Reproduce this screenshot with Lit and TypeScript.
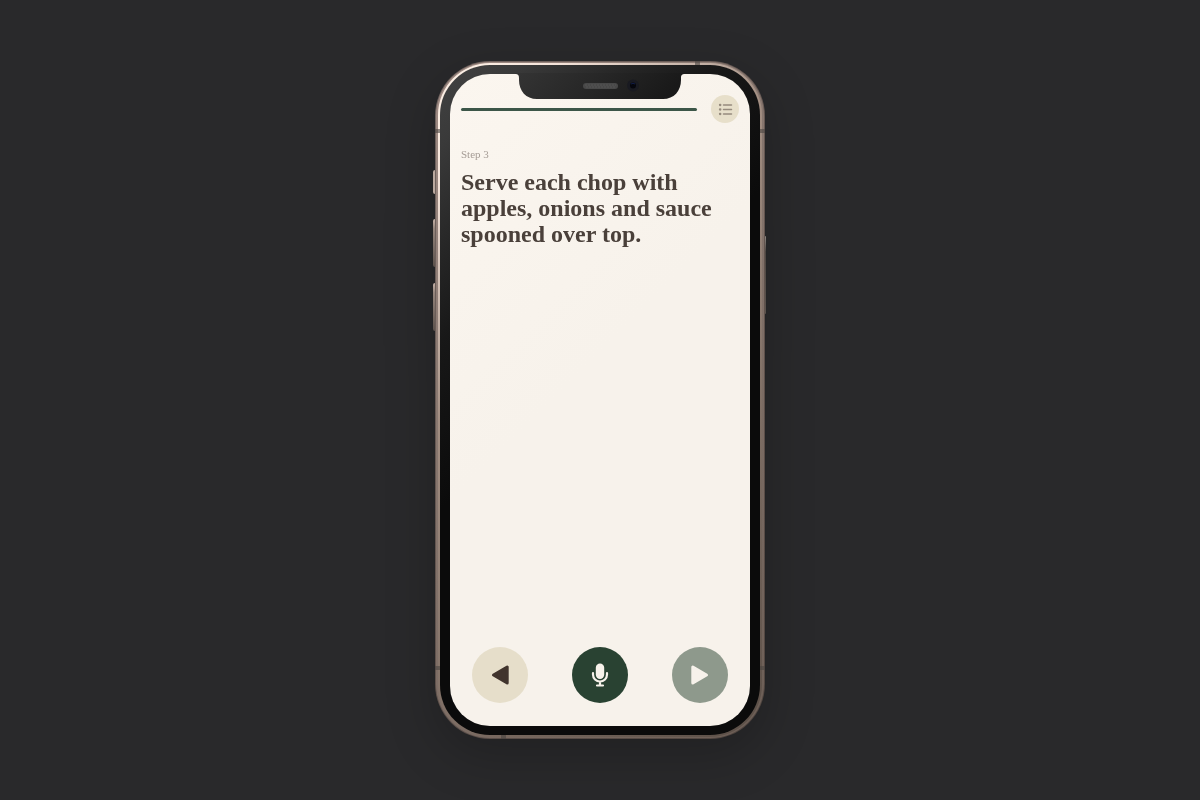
import { LitElement, html, css, svg } from "lit";
import { customElement } from "lit/decorators.js";

@customElement("phone-frame")
export class PhoneFrame extends LitElement {
  static styles = css`
    :host {
      position: relative;
      display: block;
      width: 330px;
      max-width: 100%;
      filter: drop-shadow(0 16px 24px #0003);
    }
    .rail {
      position: relative;
      padding: 1px;
      border-radius: 55px;
      background: linear-gradient(135deg, #716460, #63554f 50%, #514640);
    }
    .edge {
      padding: 1px 2px;
      border-radius: 54px;
      background: linear-gradient(135deg, #a08c85, #8b7a72 30%, #6c5e56);
    }
    .shine {
      padding: 2px;
      border-radius: 52px;
      background: linear-gradient(135deg, #fff3e8 0%, #f5e4da 12%, #a18d81 36%, #5a4e46 100%);
    }
    .bezel {
      padding: 9px 10px;
      border-radius: 50px;
      background: linear-gradient(
        135deg,
        #424242 0%,
        #3a3a3a 8%,
        #282828 18%,
        #181818 28%,
        #0b0b0b 45%
      );
    }
    .screen {
      display: flex;
      flex-direction: column;
      height: 652px;
      border-radius: 40px;
      overflow: hidden;
      background: linear-gradient(135deg, #fbf6ef, #f7f2eb 45%, #f7f2eb);
    }
    .notch {
      position: absolute;
      top: 12px;
      left: 50%;
      width: 170px;
      height: 26px;
      margin-left: -85px;
    }
    .side {
      position: absolute;
      width: 2px;
      border-radius: 2px 0 0 2px;
      background: linear-gradient(#c6b2a8, #95857c 20%, #5c514b);
    }
    .mute { left: -2px; top: 109px; height: 24px; background: #bba99f; }
    .up { left: -2px; top: 158px; height: 48px; }
    .down { left: -2px; top: 222px; height: 48px; }
    .power {
      left: 330px;
      top: 175px;
      height: 78px;
      width: 1px;
      border-radius: 0 2px 2px 0;
      background: linear-gradient(#8d8681, #4e4742 20%, #5b534d);
    }
    .band {
      position: absolute;
      width: 5px;
      height: 4px;
      background: #49444199;
    }
    .tl { left: 0; top: 68px; }
    .tr { right: 0; top: 68px; }
    .bl { left: 0; bottom: 69px; }
    .br { right: 0; bottom: 69px; }
    .top { left: 260px; top: 0; }
    .bottom { left: 66px; bottom: 0; }
  `;

  render() {
    return html`
      <span class="side mute"></span>
      <span class="side up"></span>
      <span class="side down"></span>
      <span class="side power"></span>
      <div class="rail">
        <div class="edge">
          <div class="shine">
            <div class="bezel">
              <div class="screen"><slot></slot></div>
            </div>
          </div>
        </div>
        <span class="band tl"></span>
        <span class="band tr"></span>
        <span class="band bl"></span>
        <span class="band br"></span>
        <span class="band top"></span>
        <span class="band bottom"></span>
      </div>
      <svg class="notch" viewBox="0 0 170 26" aria-hidden="true">
        <defs>
          <linearGradient id="glass" x1="0" x2="1" y1="0" y2="0.15">
            <stop offset="0" stop-color="#343434" />
            <stop offset="0.5" stop-color="#272727" />
            <stop offset="1" stop-color="#191919" />
          </linearGradient>
        </defs>
        <path
          fill="url(#glass)"
          d="M0 0H170V1C167 1 166 2 166 5V7C166 18 159 26 148 26H22C11 26 4 18 4 7V5C4 2 3 1 0 1Z"
        />
        <rect x="68" y="10" width="35" height="6" rx="3" fill="#484848" />
        <path d="M70 12H101M71 14H100" stroke="#545454" stroke-width="1" stroke-dasharray="2 1" />
        <circle cx="118" cy="12.500" r="6" fill="#191a21" />
        <circle cx="118" cy="12.500" r="3" fill="#05060d" />
        <path d="M116 11Q118 9.500 120 11" stroke="#111d48" fill="none" />
      </svg>
    `;
  }
}

const listIcon = svg`
  <g fill="none" stroke="#968b7e" stroke-width="1.500" stroke-linecap="round">
    <path d="M5.500 3H13.500M5.500 7.500H13.500M5.500 12H13.500" />
    <path d="M2 3H2.300M2 7.500H2.300M2 12H2.300" stroke-width="2.300" />
  </g>`;

@customElement("app-root")
export class AppRoot extends LitElement {
  static styles = css`
    :host {
      display: flex;
      align-items: center;
      justify-content: center;
      box-sizing: border-box;
      min-height: 100vh;
      background: #29292b;
      color: #4a403a;
      font-family: "Liberation Serif", serif;
    }
    button {
      display: grid;
      place-items: center;
      padding: 0;
      border: 0;
      border-radius: 50%;
      cursor: pointer;
    }
    .top {
      display: flex;
      align-items: center;
      gap: 14px;
      padding: 21px 11px 0;
    }
    .progress {
      flex: 1;
      height: 3px;
      border-radius: 2px;
      background: #3c5648;
    }
    .list {
      width: 28px;
      height: 28px;
      background: #e7dfca;
    }
    .step {
      flex: 1;
      padding: 24px 11px 0;
    }
    .label {
      margin: 0 0 8px;
      color: #a59c95;
      font-size: 11px;
      line-height: 14px;
    }
    h1 {
      margin: 0;
      font-size: 24px;
      font-weight: 600;
      line-height: 26px;
    }
    .controls {
      display: flex;
      justify-content: space-between;
      padding: 0 22px 23px;
    }
    .round {
      width: 56px;
      height: 56px;
    }
    .back { background: #e6deca; color: #41342d; }
    .mic { background: #294232; color: #f7f2eb; }
    .next { background: #8e998c; color: #f7f2eb; }
  `;

  render() {
    return html`
      <phone-frame>
        <header class="top">
          <div
            class="progress"
            role="progressbar"
            aria-label="Progress"
            aria-valuenow="100"
          ></div>
          <button class="list" aria-label="All steps">
            <svg width="15" height="15" viewBox="0 0 15 15">${listIcon}</svg>
          </button>
        </header>
        <main class="step">
          <p class="label">Step 3</p>
          <h1>Serve each chop with apples, onions and sauce spooned over top.</h1>
        </main>
        <footer class="controls">
          <button class="round back" aria-label="Previous step">
            <svg width="20" height="24" viewBox="0 0 20 24">
              <path
                d="M3.500 12L17.200 4V20Z"
                fill="currentColor"
                stroke="currentColor"
                stroke-width="3"
                stroke-linejoin="round"
              />
            </svg>
          </button>
          <button class="round mic" aria-label="Voice control">
            <svg width="20" height="26" viewBox="0 0 20 26">
              <rect x="5.800" y="1.500" width="8.400" height="15.500" rx="4.200" fill="currentColor" />
              <path
                d="M3 11V12.500A7 7 0 0 0 17 12.500V11M10 20V23M7 23.500H13"
                fill="none"
                stroke="currentColor"
                stroke-width="2.200"
                stroke-linecap="round"
              />
            </svg>
          </button>
          <button class="round next" aria-label="Next step">
            <svg width="20" height="24" viewBox="0 0 20 24">
              <path
                d="M16.500 12L2.800 4V20Z"
                fill="currentColor"
                stroke="currentColor"
                stroke-width="3"
                stroke-linejoin="round"
              />
            </svg>
          </button>
        </footer>
      </phone-frame>
    `;
  }
}
